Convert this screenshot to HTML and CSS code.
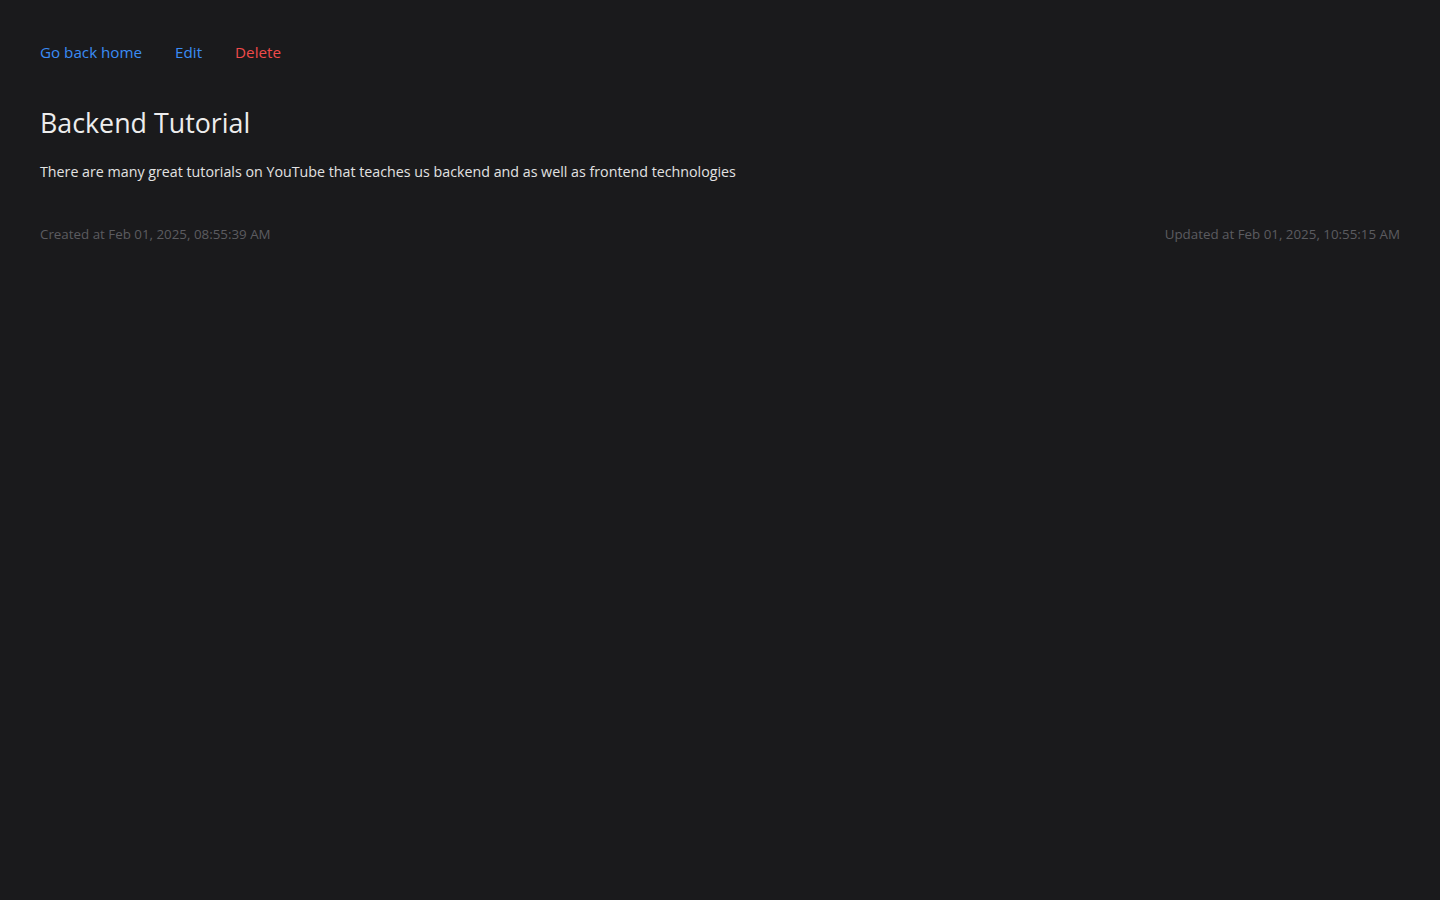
FILE: index.html
```html
<!DOCTYPE html>
<html lang="en">
<head>
<meta charset="utf-8">
<title>Backend Tutorial</title>
<link rel="stylesheet" href="styles.css">
</head>
<body>
<main class="page">
  <nav class="actions">
    <a class="link" href="#">Go back home</a>
    <a class="link" href="#">Edit</a>
    <a class="link link-danger" href="#">Delete</a>
  </nav>
  <h1 class="title">Backend Tutorial</h1>
  <p class="description">There are many great tutorials on YouTube that teaches us backend and as well as frontend technologies</p>
  <footer class="meta">
    <span class="date">Created at Feb 01, 2025, 08:55:39 AM</span>
    <span class="date">Updated at Feb 01, 2025, 10:55:15 AM</span>
  </footer>
</main>
</body>
</html>
```

FILE: styles.css
```css
html, body {
  margin: 0;
  padding: 0;
  background: #1a1a1c;
  min-height: 100%;
}

body {
  font-family: "Open Sans", "Noto Sans", sans-serif;
  color: #e6e6e6;
}

.page {
  padding: 40px;
}

.actions {
  display: flex;
  gap: 33px;
  height: 24px;
  align-items: center;
}

.link {
  color: #3b8cf5;
  text-decoration: none;
  font-size: 15.2px;
}

.link-danger {
  color: #f04a4a;
}

.title {
  margin: 41px 0 0;
  font-size: 26.8px;
  font-weight: 400;
  line-height: 36px;
  color: #ededed;
}

.description {
  margin: 21px 0 0;
  font-size: 14.25px;
  line-height: 20px;
  color: #e2e2e2;
}

.meta {
  margin-top: 42px;
  display: flex;
  justify-content: space-between;
  line-height: 20px;
}

.date {
  font-size: 13.35px;
  color: #5c5c60;
}
```
